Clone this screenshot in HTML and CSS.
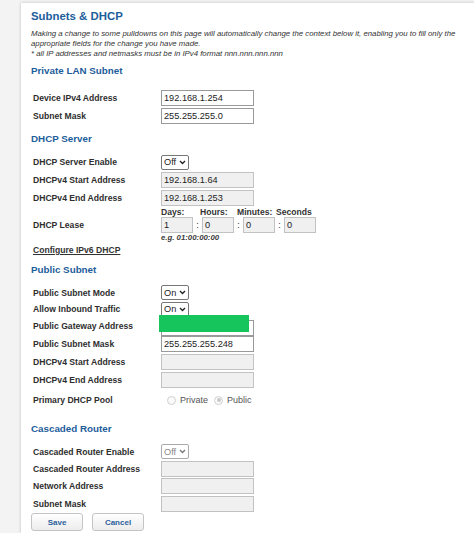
FILE: index.html
```html
<!DOCTYPE html>
<html lang="en">
  <head>
    <meta charset="UTF-8" />
    <title>Subnets &amp; DHCP</title>
    <link rel="stylesheet" href="styles.css">
  </head>
  <body>
    <div class="panel">
      <h1 class="title">Subnets &amp; DHCP</h1>
      <p class="note">
        Making a change to some pulldowns on this page will automatically change the context below it, enabling you to fill only the<br>
        appropriate fields for the change you have made.<br>
        * all IP addresses and netmasks must be in IPv4 format nnn.nnn.nnn.nnn
      </p>

      <h2 class="section first">Private LAN Subnet</h2>
      <div class="fields">
        <div class="row">
          <span class="label">Device IPv4 Address</span>
          <input class="text" type="text" value="192.168.1.254">
        </div>
        <div class="row">
          <span class="label">Subnet Mask</span>
          <input class="text" type="text" value="255.255.255.0">
        </div>
      </div>

      <h2 class="section">DHCP Server</h2>
      <div class="fields">
        <div class="row">
          <span class="label">DHCP Server Enable</span>
          <div class="select">Off<svg viewBox="0 0 8 6" width="7" height="5"><path d="M1 1.2 4 4.2 7 1.2" fill="none" stroke="#222" stroke-width="1.6"/></svg></div>
        </div>
        <div class="row">
          <span class="label">DHCPv4 Start Address</span>
          <input class="text off" type="text" value="192.168.1.64">
        </div>
        <div class="row">
          <span class="label">DHCPv4 End Address</span>
          <input class="text off" type="text" value="192.168.1.253">
        </div>
        <div class="lease">
          <div class="lease-heads">
            <span class="head days">Days:</span>
            <span class="head hours">Hours:</span>
            <span class="head mins">Minutes:</span>
            <span class="head">Seconds</span>
          </div>
          <div class="row lease-row">
            <span class="label">DHCP Lease</span>
            <div class="lease-inputs">
              <input class="text off small" type="text" value="1">
              <span class="colon">:</span>
              <input class="text off small" type="text" value="0">
              <span class="colon">:</span>
              <input class="text off small" type="text" value="0">
              <span class="colon">:</span>
              <input class="text off small" type="text" value="0">
            </div>
          </div>
          <div class="example">e.g. 01:00:00:00</div>
        </div>
        <a class="link" href="#">Configure IPv6 DHCP</a>
      </div>

      <h2 class="section">Public Subnet</h2>
      <div class="fields">
        <div class="row short">
          <span class="label">Public Subnet Mode</span>
          <div class="select">On<svg viewBox="0 0 8 6" width="7" height="5"><path d="M1 1.2 4 4.2 7 1.2" fill="none" stroke="#222" stroke-width="1.6"/></svg></div>
        </div>
        <div class="row shorter">
          <span class="label">Allow Inbound Traffic</span>
          <div class="select">On<svg viewBox="0 0 8 6" width="7" height="5"><path d="M1 1.2 4 4.2 7 1.2" fill="none" stroke="#222" stroke-width="1.6"/></svg></div>
        </div>
        <div class="row">
          <span class="label">Public Gateway Address</span>
          <div class="masked">
            <input class="text" type="text" value="">
            <span class="redact"></span>
          </div>
        </div>
        <div class="row">
          <span class="label">Public Subnet Mask</span>
          <input class="text" type="text" value="255.255.255.248">
        </div>
        <div class="row">
          <span class="label">DHCPv4 Start Address</span>
          <input class="text off" type="text" value="">
        </div>
        <div class="row">
          <span class="label">DHCPv4 End Address</span>
          <input class="text off" type="text" value="">
        </div>
        <div class="row pool">
          <span class="label">Primary DHCP Pool</span>
          <div class="radios">
            <span class="radio"></span><span class="radio-text">Private</span>
            <span class="radio checked"></span><span class="radio-text">Public</span>
          </div>
        </div>
      </div>

      <h2 class="section cascade">Cascaded Router</h2>
      <div class="fields">
        <div class="row short">
          <span class="label">Cascaded Router Enable</span>
          <div class="select disabled">Off<svg viewBox="0 0 8 6" width="7" height="5"><path d="M1 1.2 4 4.2 7 1.2" fill="none" stroke="#777" stroke-width="1.6"/></svg></div>
        </div>
        <div class="row short">
          <span class="label">Cascaded Router Address</span>
          <input class="text off" type="text" value="">
        </div>
        <div class="row">
          <span class="label">Network Address</span>
          <input class="text off" type="text" value="">
        </div>
        <div class="row">
          <span class="label">Subnet Mask</span>
          <input class="text off" type="text" value="">
        </div>
      </div>

      <div class="buttons">
        <button class="btn">Save</button>
        <button class="btn">Cancel</button>
      </div>
    </div>
  </body>
</html>
```

FILE: styles.css
```css
html,
body {
  margin: 0;
  height: 100%;
  overflow: hidden;
}
body {
  background-color: #f3f3f3;
  font-family: "Liberation Sans", Arial, sans-serif;
  color: #333;
  padding: 3px 0 0 21px;
  box-sizing: border-box;
}
.panel {
  height: 100%;
  background-color: #fff;
  box-shadow: 0 0 3px rgba(0, 0, 0, 0.22);
  padding: 5px 0 0 10px;
  box-sizing: border-box;
  overflow: hidden;
}
.title {
  margin: 0;
  font-size: 11.4px;
  line-height: 16px;
  color: #1d5d9b;
}
.note {
  margin: 5px 0 0;
  font-size: 7.8px;
  line-height: 10px;
  font-style: italic;
  white-space: nowrap;
  color: #333;
}
.section {
  margin: 7px 0 0;
  font-size: 9.8px;
  line-height: 14px;
  color: #1d5d9b;
}
.section.first {
  margin-top: 5px;
}
.section.cascade {
  margin-top: 11px;
}
.fields {
  margin-top: 7px;
  padding-left: 2px;
}
.section.first + .fields {
  margin-top: 11px;
}
.row {
  display: flex;
  align-items: center;
  height: 18px;
}
.row.short {
  height: 17px;
}
.row.shorter {
  height: 16px;
}
.label {
  width: 128px;
  flex: none;
  font-size: 8.6px;
  font-weight: bold;
  color: #2e2e2e;
}
.text {
  width: 93px;
  height: 16px;
  box-sizing: border-box;
  margin: 0;
  padding: 0 2px;
  border: 1px solid #9a9a9a;
  background-color: #fff;
  font-family: "Liberation Sans", Arial, sans-serif;
  font-size: 9.2px;
  color: #222;
  outline: none;
}
.text.off {
  background-color: #f0f0f0;
  border-color: #c2c2c2;
}
.text.small {
  width: 32px;
}
.select {
  width: 28px;
  height: 15px;
  box-sizing: border-box;
  border: 1px solid #777;
  border-radius: 2px;
  display: flex;
  align-items: center;
  justify-content: space-between;
  padding: 0 2px;
  font-size: 9.2px;
  color: #222;
  background-color: #fff;
}
.select.disabled {
  color: #888;
  border-color: #aaa;
}
.lease-heads {
  display: flex;
  height: 10px;
  line-height: 10px;
  padding-left: 128px;
  font-size: 8.6px;
  font-weight: bold;
  color: #333;
}
.head.days {
  width: 39px;
}
.head.hours {
  width: 37px;
}
.head.mins {
  width: 39px;
}
.lease-row {
  height: 16px;
}
.lease-inputs {
  display: flex;
  align-items: center;
}
.colon {
  width: 9px;
  text-align: center;
  font-size: 9px;
  color: #333;
}
.example {
  padding-left: 128px;
  height: 9px;
  line-height: 9px;
  font-size: 7.8px;
  font-style: italic;
  font-weight: bold;
  color: #3a3a3a;
}
.link {
  display: block;
  margin-top: 2px;
  line-height: 12px;
  font-size: 8.6px;
  font-weight: bold;
  color: #333;
  text-decoration: underline;
}
.masked {
  position: relative;
}
.redact {
  position: absolute;
  left: -2px;
  top: -2px;
  width: 90px;
  height: 17px;
  background-color: #16c55b;
}
.row.pool {
  height: 22px;
}
.radios {
  display: flex;
  align-items: center;
  padding-left: 6px;
  font-size: 9px;
  color: #555;
}
.radio {
  width: 7px;
  height: 7px;
  border: 1px solid #d0d0d0;
  border-radius: 50%;
  background-color: #fafafa;
  margin-right: 4px;
  position: relative;
}
.radio.checked::after {
  content: "";
  position: absolute;
  left: 1.5px;
  top: 1.5px;
  width: 4px;
  height: 4px;
  border-radius: 50%;
  background-color: #c8c8c8;
}
.radio-text {
  margin-right: 6px;
}
.buttons {
  display: flex;
  gap: 9px;
}
.btn {
  width: 52px;
  height: 18px;
  margin: 0;
  padding: 0;
  border: 1px solid #c4c4c4;
  border-radius: 3px;
  background: linear-gradient(#fff, #ececec);
  font-family: "Liberation Sans", Arial, sans-serif;
  font-size: 8px;
  font-weight: bold;
  color: #2d5f9a;
}
```
